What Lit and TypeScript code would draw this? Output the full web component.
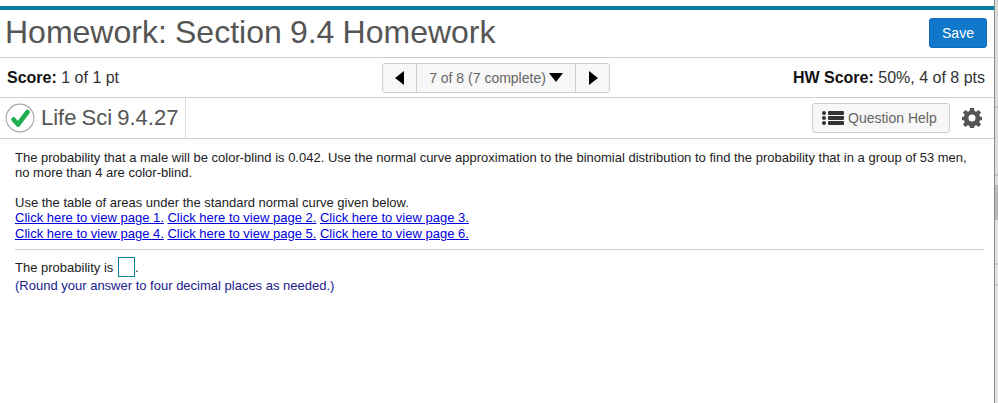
import { LitElement, css, html } from "lit";
import { customElement } from "lit/decorators.js";

@customElement("app-root")
export class AppRoot extends LitElement {
  static styles = css`
    :host {
      display: flex;
      width: 998px;
      height: 403px;
      overflow: hidden;
      background: #fff;
      font-family: "Liberation Sans", Arial, sans-serif;
      color: #222;
    }
    .main {
      width: 994px;
      box-sizing: border-box;
      padding-top: 6px;
    }
    .edge {
      width: 4px;
      background: #dcdcdc;
      border-left: 1px solid #8a8a8a;
      box-sizing: border-box;
      display: flex;
      flex-direction: column;
    }
    .edge div { flex: none; }
    .edge .line { height: 2px; background: #c4c4c4; }
    .edge .thumb { height: 35px; background: #b9b9b9; }
    .edge .up { height: 106px; }
    .edge .a { height: 66px; }
    .edge .b { height: 9px; }
    .edge .c { height: 43px; background: #e4e4e4; }
    .edge .d { height: 19px; background: #e4e4e4; }
    .edge .rest { flex: 1; background: #e4e4e4; }
    .title-row {
      height: 47px;
      border-top: 4px solid #007fa3;
      border-bottom: 1px solid #ccd0d8;
      display: flex;
      align-items: center;
      justify-content: space-between;
      padding: 0 7px 0 5px;
    }
    h1 {
      margin: 0 0 4px;
      font-size: 32px;
      font-weight: 400;
      color: #555;
      line-height: 44px;
      word-spacing: -0.7px;
    }
    .save {
      width: 58px;
      height: 30px;
      margin-bottom: 1px;
      box-sizing: border-box;
      border: 1px solid #0f6cbf;
      border-radius: 3px;
      background: #1077c9;
      color: #fff;
      font: 14px "Liberation Sans", Arial, sans-serif;
      padding: 0;
    }
    .score-row {
      height: 39px;
      border-bottom: 1px solid #ccd0d8;
      display: grid;
      grid-template-columns: 1fr auto 1fr;
      align-items: center;
      padding: 0 9px 0 7px;
      font-size: 16px;
      color: #333;
    }
    .score-row b { color: #111; }
    .right { text-align: right; }
    .pager {
      display: flex;
      height: 30px;
      box-sizing: border-box;
      border: 1px solid #ccc;
      border-radius: 3px;
      background: #f7f7f7;
      color: #666;
      font-size: 14px;
    }
    .pager > div {
      display: flex;
      align-items: center;
      justify-content: center;
    }
    .prev { width: 33px; border-right: 1px solid #ccc; }
    .pos { width: 158px; gap: 3px; border-right: 1px solid #ccc; }
    .next { width: 33px; }
    .q-row {
      height: 40px;
      border-bottom: 1px solid #ccd0d8;
      display: flex;
      align-items: center;
      justify-content: space-between;
    }
    .q-name {
      height: 40px;
      display: flex;
      align-items: center;
      gap: 6px;
      padding-left: 5px;
      width: 180px;
      border-right: 1px solid #ddd;
      font-size: 22px;
      color: #555;
      white-space: nowrap;
      word-spacing: -1px;
    }
    .q-name svg { flex: none; }
    .tools {
      display: flex;
      align-items: center;
      gap: 12px;
      padding-right: 12px;
    }
    .help {
      display: flex;
      align-items: center;
      gap: 4px;
      width: 138px;
      height: 30px;
      box-sizing: border-box;
      padding-left: 9px;
      border: 1px solid #ccc;
      border-radius: 3px;
      background: #f7f7f7;
      color: #666;
      font-size: 14px;
    }
    .content {
      padding: 11px 10px 0 15px;
      font-size: 13px;
      line-height: 15px;
      color: #222;
    }
    .content p { margin: 0; }
    .gap-top { margin-top: 15px !important; }
    .links { line-height: 16px; }
    a { color: #0000e0; text-decoration: underline; }
    hr {
      border: 0;
      border-top: 1px solid #ccd0d8;
      margin: 7px 0 7px;
    }
    .answer { display: flex; align-items: center; height: 20px; white-space: pre; }
    .box {
      display: inline-block;
      width: 17px;
      height: 20px;
      box-sizing: border-box;
      border: 1px solid #007f9e;
      margin-left: 1px;
    }
    .note { color: #20208f; margin-top: 1px !important; }
  `;

  render() {
    return html`
      <div class="main">
        <div class="title-row">
          <h1>Homework: Section 9.4 Homework</h1>
          <button class="save">Save</button>
        </div>
        <div class="score-row">
          <div><b>Score:</b> 1 of 1 pt</div>
          <div class="pager">
            <div class="prev">
              <svg width="10" height="14" viewBox="0 0 10 14"><path d="M9 0v14L0 7z" fill="#000" /></svg>
            </div>
            <div class="pos">
              7 of 8 (7 complete)
              <svg width="14" height="9" viewBox="0 0 14 9"><path d="M0 0h14L7 9z" fill="#000" /></svg>
            </div>
            <div class="next">
              <svg width="10" height="14" viewBox="0 0 10 14"><path d="M1 0v14l9-7z" fill="#000" /></svg>
            </div>
          </div>
          <div class="right"><b>HW Score:</b> 50%, 4 of 8 pts</div>
        </div>
        <div class="q-row">
          <div class="q-name">
            <svg width="30" height="30" viewBox="0 0 30 30">
              <circle cx="15" cy="15" r="13.8" fill="#fff" stroke="#aaa" stroke-width="1.2" />
              <path d="M8.500 16.500l4.500 5L22.500 9" fill="none" stroke="#1fae52" stroke-width="4.600" stroke-linecap="round" stroke-linejoin="round" />
            </svg>
            Life Sci 9.4.27
          </div>
          <div class="tools">
            <div class="help">
              <svg width="22" height="14" viewBox="0 0 22 14" fill="#333">
                <circle cx="2" cy="2" r="2" /><circle cx="2" cy="7" r="2" /><circle cx="2" cy="12" r="2" />
                <rect x="6" y="0" width="16" height="4" rx="1" /><rect x="6" y="5" width="16" height="4" rx="1" /><rect x="6" y="10" width="16" height="4" rx="1" />
              </svg>
              Question Help
            </div>
            <svg width="20" height="20" viewBox="0 0 20 20">
              <path fill="#555" fill-rule="evenodd" d="M8 0h4l.5 3 1.600.7L16.600 2 19 4.400 17.300 6.900 18 8.500l2 .5v3l-2 .5-.7 1.600L19 16.600 16.600 19l-2.500-1.700-1.600.7-.5 2H8l-.5-2-1.600-.7L3.400 19 1 16.600l1.700-2.500L2 12.500 0 12V9l2-.5.7-1.600L1 4.400 3.400 2l2.500 1.700L7.500 3zM10 6.500a3.500 3.500 0 1 0 0 7 3.500 3.500 0 0 0 0-7z" />
            </svg>
          </div>
        </div>
        <div class="content">
          <p>The probability that a male will be color-blind is 0.042. Use the normal curve approximation to the binomial distribution to find the probability that in a group of 53 men, no more than 4 are color-blind.</p>
          <p class="gap-top">Use the table of areas under the standard normal curve given below.</p>
          <p class="links"><a>Click here to view page 1.</a> <a>Click here to view page 2.</a> <a>Click here to view page 3.</a></p>
          <p class="links"><a>Click here to view page 4.</a> <a>Click here to view page 5.</a> <a>Click here to view page 6.</a></p>
          <hr />
          <p class="answer">The probability is <span class="box"></span>.</p>
          <p class="note">(Round your answer to four decimal places as needed.)</p>
        </div>
      </div>
      <div class="edge">
        <div class="up"></div>
        <div class="line"></div>
        <div class="a"></div>
        <div class="line"></div>
        <div class="b"></div>
        <div class="thumb"></div>
        <div class="c"></div>
        <div class="line"></div>
        <div class="d"></div>
        <div class="line"></div>
        <div class="rest"></div>
      </div>
    `;
  }
}
